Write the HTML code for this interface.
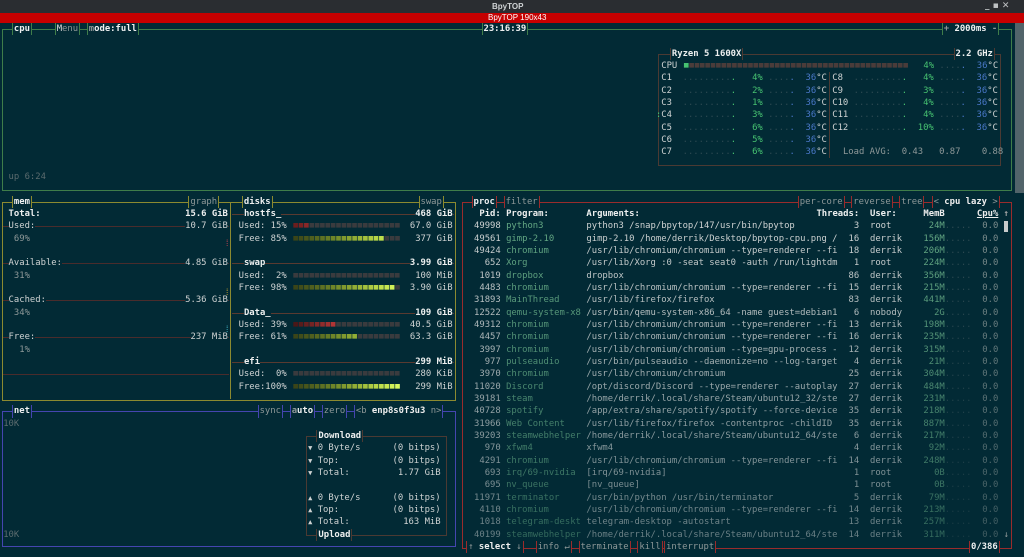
<!DOCTYPE html>
<html><head><meta charset="utf-8"><style>
body{margin:0;width:1024px;height:557px;background:#022a35;overflow:hidden;position:relative;font:8.89px/12.33px "DejaVu Sans Mono","Liberation Mono",monospace;color:#cfd3d3}
.a{position:absolute;white-space:pre}
.bx{position:absolute;border:1px solid}
.t{position:absolute;white-space:pre;background:#022a35;border-left:1px solid;border-right:1px solid;padding:0 1px;height:12.33px}
.B{font-weight:bold;color:#eef0f0}
.gy{color:#8e9898}
.dm{color:#5b6b6e}
.d{color:#2e4a52}
.g{color:#47c271}
.bl{color:#4a78c8}
.hl{position:absolute;height:1px;background:#4a2c2c}
.e{color:#3a3b3e}
.q{font-size:12px;letter-spacing:-1.875px;line-height:0;vertical-align:-0.5px}
.r{position:absolute;left:0;width:1024px;height:12.33px}
.r i{position:absolute;font-style:normal;white-space:pre}
.c1{left:468px;width:32.75px;text-align:right}
.c2{left:506.1px;color:#64a884}
.c3{left:586.4px}
.c4{left:827px;width:32.2px;text-align:right}
.c5{left:870px}
.c6{left:912.7px;width:32.1px;text-align:right;color:#64a884}
.c7{left:944.8px;color:#2e4a52}
.c8{left:976.3px;width:22px;text-align:right;color:#7c8c8c}
</style></head><body>
<div style="position:absolute;left:0;top:0;width:1024px;height:13px;background:#2a2d31"></div>
<div class="a" style="left:492px;top:1px;font:bold 8px/11px 'Liberation Sans',sans-serif;color:#cfd2d4">BpyTOP</div>
<div class="a" style="left:985px;top:1px;font:bold 9px/11px 'DejaVu Sans',sans-serif;color:#bfc2c4">_ ▪ ✕</div>
<div style="position:absolute;left:0;top:13px;width:1024px;height:10px;background:#c60000"></div>
<div class="a" style="left:488px;top:13px;font:8px/10px 'Liberation Sans',sans-serif;color:#fff">BpyTOP 190x43</div>
<div style="position:absolute;left:1015px;top:23px;width:9px;height:170px;background:#52646a"></div>

<div class="bx" style="left:2px;top:29px;width:1008px;height:160px;border-color:#3f7d4a"></div>
<div class="t B" style="left:11.9px;top:23px;border-color:#3f7d4a">cpu</div>
<div class="t gy" style="left:54.7px;top:23px;border-color:#3f7d4a"><span style="color:#ddd">M</span>enu</div>
<div class="t B" style="left:86.8px;top:23px;border-color:#3f7d4a"><span class="gy">m</span>ode:full</div>
<div class="t B" style="left:481.5px;top:23px;border-color:#3f7d4a">23:16:39</div>
<div class="t B" style="left:941.8px;top:23px;border-color:#3f7d4a"><span class="gy">+</span> 2000ms <span class="gy">-</span></div>
<div class="a dm" style="left:8.55px;top:170.96px">up 6:24</div>

<div class="bx" style="left:658px;top:53.8px;width:341px;height:110px;border-color:#4b3a33"></div>
<div style="position:absolute;left:829px;top:72.3px;width:1px;height:86px;background:#4b3a33"></div>
<div class="t B" style="left:669.9px;top:47.66px;border-color:#4b3a33">Ryzen 5 1600X</div>
<div class="t B" style="left:953.5px;top:47.66px;border-color:#4b3a33">2.2 GHz</div>
<div class="a g" style="left:655.9px;top:109.31px">:</div>
<div class="a" style="left:661.25px;top:59.99px">CPU <span class="q"><span class="g">▪</span><span style="color:#4a3c3a">▪▪▪▪▪▪▪▪▪▪▪▪▪▪▪▪▪▪▪▪▪▪▪▪▪▪▪▪▪▪▪▪▪▪▪▪▪▪▪▪▪</span></span>   <span class="g">4%</span> <span class="d">....</span><span class="bl">.</span>  <span class="bl">36</span>°C</div>
<div class="a" style="left:661.25px;top:72.32px">C1  <span class="d">.........</span><span class="g">.</span>   <span class="g">4%</span> <span class="d">....</span><span class="bl">.</span>  <span class="bl">36</span>°C C8  <span class="d">.........</span><span class="g">.</span>   <span class="g">4%</span> <span class="d">....</span><span class="bl">.</span>  <span class="bl">36</span>°C</div>
<div class="a" style="left:661.25px;top:84.65px">C2  <span class="d">.........</span><span class="g">.</span>   <span class="g">2%</span> <span class="d">....</span><span class="bl">.</span>  <span class="bl">36</span>°C C9  <span class="d">.........</span><span class="g">.</span>   <span class="g">3%</span> <span class="d">....</span><span class="bl">.</span>  <span class="bl">36</span>°C</div>
<div class="a" style="left:661.25px;top:96.98px">C3  <span class="d">.........</span><span class="g">.</span>   <span class="g">1%</span> <span class="d">....</span><span class="bl">.</span>  <span class="bl">36</span>°C C10 <span class="d">.........</span><span class="g">.</span>   <span class="g">4%</span> <span class="d">....</span><span class="bl">.</span>  <span class="bl">36</span>°C</div>
<div class="a" style="left:661.25px;top:109.31px">C4  <span class="d">.........</span><span class="g">.</span>   <span class="g">3%</span> <span class="d">....</span><span class="bl">.</span>  <span class="bl">36</span>°C C11 <span class="d">.........</span><span class="g">.</span>   <span class="g">4%</span> <span class="d">....</span><span class="bl">.</span>  <span class="bl">36</span>°C</div>
<div class="a" style="left:661.25px;top:121.64px">C5  <span class="d">.........</span><span class="g">.</span>   <span class="g">6%</span> <span class="d">....</span><span class="bl">.</span>  <span class="bl">36</span>°C C12 <span class="d">.........</span><span class="g">.</span>  <span class="g">10%</span> <span class="d">....</span><span class="bl">.</span>  <span class="bl">36</span>°C</div>
<div class="a" style="left:661.25px;top:133.97px">C6  <span class="d">.........</span><span class="g">.</span>   <span class="g">5%</span> <span class="d">....</span><span class="bl">.</span>  <span class="bl">36</span>°C</div>
<div class="a" style="left:661.25px;top:146.3px">C7  <span class="d">.........</span><span class="g">.</span>   <span class="g">6%</span> <span class="d">....</span><span class="bl">.</span>  <span class="bl">36</span>°C   <span class="gy">Load AVG:  0.43   0.87    0.88</span></div>

<div class="bx" style="left:2px;top:201.8px;width:452px;height:197px;border-color:#8c8a30"></div>
<div style="position:absolute;left:230px;top:201.8px;width:1px;height:197px;background:#8c8a30"></div>
<div class="t B" style="left:11.9px;top:195.62px;border-color:#8c8a30">mem</div>
<div class="t gy" style="left:188.4px;top:195.62px;border-color:#8c8a30">graph</div>
<div class="t B" style="left:241.9px;top:195.62px;border-color:#8c8a30">disks</div>
<div class="t gy" style="left:418.5px;top:195.62px;border-color:#8c8a30">swap</div>
<div class="hl" style="left:3px;top:226.4px;width:226px"></div>
<div class="hl" style="left:3px;top:263.4px;width:226px"></div>
<div class="hl" style="left:3px;top:300.4px;width:226px"></div>
<div class="hl" style="left:3px;top:337.4px;width:226px"></div>
<div class="hl" style="left:3px;top:374.4px;width:226px"></div>
<div class="a B" style="left:8.55px;top:207.95px">Total:</div>
<div class="a B" style="right:796.1px;top:207.95px">15.6 GiB</div>
<div class="a" style="left:8.55px;top:220.28px;background:#022a35">Used:</div>
<div class="a" style="right:796.1px;top:220.28px;background:#022a35">10.7 GiB</div>
<div class="a gy" style="left:13.9px;top:232.61px">69%</div>
<div class="a" style="left:8.55px;top:257.27px;background:#022a35">Available:</div>
<div class="a" style="right:796.1px;top:257.27px;background:#022a35">4.85 GiB</div>
<div class="a gy" style="left:13.9px;top:269.6px">31%</div>
<div class="a" style="left:8.55px;top:294.26px;background:#022a35">Cached:</div>
<div class="a" style="right:796.1px;top:294.26px;background:#022a35">5.36 GiB</div>
<div class="a gy" style="left:13.9px;top:306.59px">34%</div>
<div class="a" style="left:8.55px;top:331.25px;background:#022a35">Free:</div>
<div class="a" style="right:796.1px;top:331.25px;background:#022a35">237 MiB</div>
<div class="a gy" style="left:19.25px;top:343.58px">1%</div>
<div class="a" style="left:224.5px;top:238px;color:#c04050">⁞</div>
<div class="a" style="left:224.5px;top:287px;color:#c0a030">⁞</div>
<div class="a" style="left:224.5px;top:324px;color:#40b0c0">⁞</div>

<div class="hl" style="left:232px;top:214.1px;width:222px;background:#5a3a30"></div>
<div class="hl" style="left:232px;top:263.4px;width:222px;background:#5a3a30"></div>
<div class="hl" style="left:232px;top:312.7px;width:222px;background:#5a3a30"></div>
<div class="hl" style="left:232px;top:362.1px;width:222px;background:#5a3a30"></div>
<div class="a B" style="left:243.95px;top:207.95px;background:#022a35">hostfs_</div>
<div class="a B" style="right:571.4px;top:207.95px;background:#022a35">468 GiB</div>
<div class="a" style="left:238.6px;top:220.28px">Used: 15% <span class="q"><span style="color:#6a1e1e">▪</span><span style="color:#7a2222">▪</span><span style="color:#8a2828">▪</span><span class="e">▪▪▪▪▪▪▪▪▪▪▪▪▪▪▪▪▪</span></span></div>
<div class="a" style="right:571.4px;top:220.28px">67.0 GiB</div>
<div class="a" style="left:238.6px;top:232.61px">Free: 85% <span class="q"><span style="color:#3a4518">▪</span><span style="color:#414d1a">▪</span><span style="color:#48561c">▪</span><span style="color:#4f5f1e">▪</span><span style="color:#566820">▪</span><span style="color:#5e7122">▪</span><span style="color:#667b25">▪</span><span style="color:#6e8528">▪</span><span style="color:#778f2b">▪</span><span style="color:#80992e">▪</span><span style="color:#89a331">▪</span><span style="color:#92ad35">▪</span><span style="color:#9bb739">▪</span><span style="color:#a4c13d">▪</span><span style="color:#adcb42">▪</span><span style="color:#b6d547">▪</span><span style="color:#bfdf4c">▪</span><span class="e">▪▪▪</span></span></div>
<div class="a" style="right:571.4px;top:232.61px">377 GiB</div>
<div class="a B" style="left:243.95px;top:257.27px;background:#022a35">swap</div>
<div class="a B" style="right:571.4px;top:257.27px;background:#022a35">3.99 GiB</div>
<div class="a" style="left:238.6px;top:269.6px">Used:  2% <span class="q e">▪▪▪▪▪▪▪▪▪▪▪▪▪▪▪▪▪▪▪▪</span></div>
<div class="a" style="right:571.4px;top:269.6px">100 MiB</div>
<div class="a" style="left:238.6px;top:281.93px">Free: 98% <span class="q"><span style="color:#3a4518">▪</span><span style="color:#414d1a">▪</span><span style="color:#48561c">▪</span><span style="color:#4f5f1e">▪</span><span style="color:#566820">▪</span><span style="color:#5e7122">▪</span><span style="color:#667b25">▪</span><span style="color:#6e8528">▪</span><span style="color:#778f2b">▪</span><span style="color:#80992e">▪</span><span style="color:#89a331">▪</span><span style="color:#92ad35">▪</span><span style="color:#9bb739">▪</span><span style="color:#a4c13d">▪</span><span style="color:#adcb42">▪</span><span style="color:#b6d547">▪</span><span style="color:#bfdf4c">▪</span><span style="color:#c8e852">▪</span><span style="color:#d0f058">▪</span><span class="e">▪</span></span></div>
<div class="a" style="right:571.4px;top:281.93px">3.90 GiB</div>
<div class="a B" style="left:243.95px;top:306.59px;background:#022a35">Data_</div>
<div class="a B" style="right:571.4px;top:306.59px;background:#022a35">109 GiB</div>
<div class="a" style="left:238.6px;top:318.92px">Used: 39% <span class="q"><span style="color:#4a1818">▪</span><span style="color:#581c1c">▪</span><span style="color:#662020">▪</span><span style="color:#742424">▪</span><span style="color:#822828">▪</span><span style="color:#902c2c">▪</span><span style="color:#a03030">▪</span><span style="color:#b03535">▪</span><span class="e">▪▪▪▪▪▪▪▪▪▪▪▪</span></span></div>
<div class="a" style="right:571.4px;top:318.92px">40.5 GiB</div>
<div class="a" style="left:238.6px;top:331.25px">Free: 61% <span class="q"><span style="color:#3a4518">▪</span><span style="color:#414d1a">▪</span><span style="color:#48561c">▪</span><span style="color:#4f5f1e">▪</span><span style="color:#566820">▪</span><span style="color:#5e7122">▪</span><span style="color:#667b25">▪</span><span style="color:#6e8528">▪</span><span style="color:#778f2b">▪</span><span style="color:#80992e">▪</span><span style="color:#89a331">▪</span><span style="color:#92ad35">▪</span><span class="e">▪▪▪▪▪▪▪▪</span></span></div>
<div class="a" style="right:571.4px;top:331.25px">63.3 GiB</div>
<div class="a B" style="left:243.95px;top:355.91px;background:#022a35">efi</div>
<div class="a B" style="right:571.4px;top:355.91px;background:#022a35">299 MiB</div>
<div class="a" style="left:238.6px;top:368.24px">Used:  0% <span class="q e">▪▪▪▪▪▪▪▪▪▪▪▪▪▪▪▪▪▪▪▪</span></div>
<div class="a" style="right:571.4px;top:368.24px">280 KiB</div>
<div class="a" style="left:238.6px;top:380.57px">Free:100% <span class="q"><span style="color:#3a4518">▪</span><span style="color:#414d1a">▪</span><span style="color:#48561c">▪</span><span style="color:#4f5f1e">▪</span><span style="color:#566820">▪</span><span style="color:#5e7122">▪</span><span style="color:#667b25">▪</span><span style="color:#6e8528">▪</span><span style="color:#778f2b">▪</span><span style="color:#80992e">▪</span><span style="color:#89a331">▪</span><span style="color:#92ad35">▪</span><span style="color:#9bb739">▪</span><span style="color:#a4c13d">▪</span><span style="color:#adcb42">▪</span><span style="color:#b6d547">▪</span><span style="color:#bfdf4c">▪</span><span style="color:#c8e852">▪</span><span style="color:#d0f058">▪</span><span style="color:#d8f860">▪</span></span></div>
<div class="a" style="right:571.4px;top:380.57px">299 MiB</div>

<div class="bx" style="left:2px;top:411.4px;width:452px;height:134px;border-color:#4545b0"></div>
<div class="t B" style="left:11.9px;top:405.23px;border-color:#4545b0">net</div>
<div class="t gy" style="left:257.6px;top:405.23px;border-color:#4545b0">sync</div>
<div class="t B" style="left:289.7px;top:405.23px;border-color:#4545b0"><span class="gy">a</span>uto</div>
<div class="t gy" style="left:321.8px;top:405.23px;border-color:#4545b0">zero</div>
<div class="t" style="left:353.9px;top:405.23px;border-color:#4545b0"><span class="gy">&lt;b</span> <b style="color:#eee">enp8s0f3u3</b> <span class="gy">n&gt;</span></div>
<div class="a dm" style="left:3.2px;top:417.56px">10K</div>
<div class="a dm" style="left:3.2px;top:528.53px">10K</div>
<div class="bx" style="left:305.5px;top:435.9px;width:139px;height:98px;border-color:#4b3a33"></div>
<div class="t B" style="left:316.4px;top:429.89px;border-color:#4b3a33">Download</div>
<div class="t B" style="left:316.4px;top:528.53px;border-color:#4b3a33">Upload</div>
<div class="a" style="left:308.15px;top:442.22px"><span style="font-size:7px">▼</span> 0 Byte/s      (0 bitps)</div>
<div class="a" style="left:308.15px;top:454.55px"><span style="font-size:7px">▼</span> Top:          (0 bitps)</div>
<div class="a" style="left:308.15px;top:466.88px"><span style="font-size:7px">▼</span> Total:         1.77 GiB</div>
<div class="a" style="left:308.15px;top:491.54px"><span style="font-size:7px">▲</span> 0 Byte/s      (0 bitps)</div>
<div class="a" style="left:308.15px;top:503.87px"><span style="font-size:7px">▲</span> Top:          (0 bitps)</div>
<div class="a" style="left:308.15px;top:516.2px"><span style="font-size:7px">▲</span> Total:          163 MiB</div>

<div class="bx" style="left:462px;top:201.8px;width:548px;height:345px;border-color:#9a2c2c"></div>
<div class="t B" style="left:471.5px;top:195.62px;border-color:#9a2c2c">proc</div>
<div class="t gy" style="left:503.6px;top:195.62px;border-color:#9a2c2c">filter</div>
<div class="t gy" style="left:797.8px;top:195.62px;border-color:#9a2c2c">per-core</div>
<div class="t gy" style="left:851.3px;top:195.62px;border-color:#9a2c2c">reverse</div>
<div class="t gy" style="left:899.1px;top:195.62px;border-color:#9a2c2c">tree</div>
<div class="t" style="left:931.6px;top:195.62px;border-color:#9a2c2c"><span class="gy">&lt;</span> <b style="color:#eee">cpu lazy</b> <span class="gy">&gt;</span></div>
<div class="t" style="left:466.2px;top:540.86px;border-color:#9a2c2c"><span class="gy">↑</span> <b style="color:#eee">select</b> <span class="gy">↓</span></div>
<div class="t gy" style="left:535.7px;top:540.86px;border-color:#9a2c2c">info ↵</div>
<div class="t gy" style="left:578.5px;top:540.86px;border-color:#9a2c2c">terminate</div>
<div class="t gy" style="left:637.4px;top:540.86px;border-color:#9a2c2c">kill</div>
<div class="t gy" style="left:664.1px;top:540.86px;border-color:#9a2c2c">interrupt</div>
<div class="t B" style="left:969px;top:540.86px;border-color:#9a2c2c">0/386</div>

<div class="r B" style="top:207.95px"><i class="c1">Pid:</i><i class="c2" style="color:#eee">Program:</i><i class="c3">Arguments:</i><i class="c4" style="left:816px;width:43.2px">Threads:</i><i class="c5">User:</i><i class="c6" style="color:#eee">MemB</i><i class="c8" style="color:#eee;text-decoration:underline">Cpu%</i><i style="left:1003.6px;color:#aaa">↑</i></div>
<div style="position:absolute;left:1004px;top:221px;width:4px;height:11px;background:#c8cccc"></div>
<div class="a gy" style="left:1003.6px;top:528.53px">↓</div>

<div class="r" style="top:220.28px"><i class="c1">49998</i><i class="c2">python3</i><i class="c3">python3 /snap/bpytop/147/usr/bin/bpytop</i><i class="c4">3</i><i class="c5">root</i><i class="c6">24M</i><i class="c7">.....</i><i class="c8">0.0</i></div>
<div class="r" style="top:232.61px;opacity:.98"><i class="c1">49561</i><i class="c2">gimp-2.10</i><i class="c3">gimp-2.10 /home/derrik/Desktop/bpytop-cpu.png /</i><i class="c4">16</i><i class="c5">derrik</i><i class="c6">156M</i><i class="c7">.....</i><i class="c8">0.0</i></div>
<div class="r" style="top:244.94px;opacity:.96"><i class="c1">49424</i><i class="c2">chromium</i><i class="c3">/usr/lib/chromium/chromium --type=renderer --fi</i><i class="c4">18</i><i class="c5">derrik</i><i class="c6">206M</i><i class="c7">.....</i><i class="c8">0.0</i></div>
<div class="r" style="top:257.27px;opacity:.94"><i class="c1">652</i><i class="c2">Xorg</i><i class="c3">/usr/lib/Xorg :0 -seat seat0 -auth /run/lightdm</i><i class="c4">1</i><i class="c5">root</i><i class="c6">224M</i><i class="c7">.....</i><i class="c8">0.0</i></div>
<div class="r" style="top:269.6px;opacity:.92"><i class="c1">1019</i><i class="c2">dropbox</i><i class="c3">dropbox</i><i class="c4">86</i><i class="c5">derrik</i><i class="c6">356M</i><i class="c7">.....</i><i class="c8">0.0</i></div>
<div class="r" style="top:281.93px;opacity:.9"><i class="c1">4483</i><i class="c2">chromium</i><i class="c3">/usr/lib/chromium/chromium --type=renderer --fi</i><i class="c4">15</i><i class="c5">derrik</i><i class="c6">215M</i><i class="c7">.....</i><i class="c8">0.0</i></div>
<div class="r" style="top:294.26px;opacity:.88"><i class="c1">31893</i><i class="c2">MainThread</i><i class="c3">/usr/lib/firefox/firefox</i><i class="c4">83</i><i class="c5">derrik</i><i class="c6">441M</i><i class="c7">.....</i><i class="c8">0.0</i></div>
<div class="r" style="top:306.59px;opacity:.86"><i class="c1">12522</i><i class="c2">qemu-system-x8</i><i class="c3">/usr/bin/qemu-system-x86_64 -name guest=debian1</i><i class="c4">6</i><i class="c5">nobody</i><i class="c6">2G</i><i class="c7">.....</i><i class="c8">0.0</i></div>
<div class="r" style="top:318.92px;opacity:.84"><i class="c1">49312</i><i class="c2">chromium</i><i class="c3">/usr/lib/chromium/chromium --type=renderer --fi</i><i class="c4">13</i><i class="c5">derrik</i><i class="c6">198M</i><i class="c7">.....</i><i class="c8">0.0</i></div>
<div class="r" style="top:331.25px;opacity:.82"><i class="c1">4457</i><i class="c2">chromium</i><i class="c3">/usr/lib/chromium/chromium --type=renderer --fi</i><i class="c4">16</i><i class="c5">derrik</i><i class="c6">235M</i><i class="c7">.....</i><i class="c8">0.0</i></div>
<div class="r" style="top:343.58px;opacity:.8"><i class="c1">3997</i><i class="c2">chromium</i><i class="c3">/usr/lib/chromium/chromium --type=gpu-process -</i><i class="c4">12</i><i class="c5">derrik</i><i class="c6">315M</i><i class="c7">.....</i><i class="c8">0.0</i></div>
<div class="r" style="top:355.91px;opacity:.78"><i class="c1">977</i><i class="c2">pulseaudio</i><i class="c3">/usr/bin/pulseaudio --daemonize=no --log-target</i><i class="c4">4</i><i class="c5">derrik</i><i class="c6">21M</i><i class="c7">.....</i><i class="c8">0.0</i></div>
<div class="r" style="top:368.24px;opacity:.76"><i class="c1">3970</i><i class="c2">chromium</i><i class="c3">/usr/lib/chromium/chromium</i><i class="c4">25</i><i class="c5">derrik</i><i class="c6">304M</i><i class="c7">.....</i><i class="c8">0.0</i></div>
<div class="r" style="top:380.57px;opacity:.74"><i class="c1">11020</i><i class="c2">Discord</i><i class="c3">/opt/discord/Discord --type=renderer --autoplay</i><i class="c4">27</i><i class="c5">derrik</i><i class="c6">484M</i><i class="c7">.....</i><i class="c8">0.0</i></div>
<div class="r" style="top:392.9px;opacity:.72"><i class="c1">39181</i><i class="c2">steam</i><i class="c3">/home/derrik/.local/share/Steam/ubuntu12_32/ste</i><i class="c4">27</i><i class="c5">derrik</i><i class="c6">231M</i><i class="c7">.....</i><i class="c8">0.0</i></div>
<div class="r" style="top:405.23px;opacity:.7"><i class="c1">40728</i><i class="c2">spotify</i><i class="c3">/app/extra/share/spotify/spotify --force-device</i><i class="c4">35</i><i class="c5">derrik</i><i class="c6">218M</i><i class="c7">.....</i><i class="c8">0.0</i></div>
<div class="r" style="top:417.56px;opacity:.68"><i class="c1">31966</i><i class="c2">Web Content</i><i class="c3">/usr/lib/firefox/firefox -contentproc -childID</i><i class="c4">35</i><i class="c5">derrik</i><i class="c6">887M</i><i class="c7">.....</i><i class="c8">0.0</i></div>
<div class="r" style="top:429.89px;opacity:.66"><i class="c1">39203</i><i class="c2">steamwebhelper</i><i class="c3">/home/derrik/.local/share/Steam/ubuntu12_64/ste</i><i class="c4">6</i><i class="c5">derrik</i><i class="c6">217M</i><i class="c7">.....</i><i class="c8">0.0</i></div>
<div class="r" style="top:442.22px;opacity:.64"><i class="c1">970</i><i class="c2">xfwm4</i><i class="c3">xfwm4</i><i class="c4">4</i><i class="c5">derrik</i><i class="c6">92M</i><i class="c7">.....</i><i class="c8">0.0</i></div>
<div class="r" style="top:454.55px;opacity:.62"><i class="c1">4291</i><i class="c2">chromium</i><i class="c3">/usr/lib/chromium/chromium --type=renderer --fi</i><i class="c4">14</i><i class="c5">derrik</i><i class="c6">248M</i><i class="c7">.....</i><i class="c8">0.0</i></div>
<div class="r" style="top:466.88px;opacity:.6"><i class="c1">693</i><i class="c2">irq/69-nvidia</i><i class="c3">[irq/69-nvidia]</i><i class="c4">1</i><i class="c5">root</i><i class="c6">0B</i><i class="c7">.....</i><i class="c8">0.0</i></div>
<div class="r" style="top:479.21px;opacity:.58"><i class="c1">695</i><i class="c2">nv_queue</i><i class="c3">[nv_queue]</i><i class="c4">1</i><i class="c5">root</i><i class="c6">0B</i><i class="c7">.....</i><i class="c8">0.0</i></div>
<div class="r" style="top:491.54px;opacity:.56"><i class="c1">11971</i><i class="c2">terminator</i><i class="c3">/usr/bin/python /usr/bin/terminator</i><i class="c4">5</i><i class="c5">derrik</i><i class="c6">79M</i><i class="c7">.....</i><i class="c8">0.0</i></div>
<div class="r" style="top:503.87px;opacity:.54"><i class="c1">4110</i><i class="c2">chromium</i><i class="c3">/usr/lib/chromium/chromium --type=renderer --fi</i><i class="c4">14</i><i class="c5">derrik</i><i class="c6">213M</i><i class="c7">.....</i><i class="c8">0.0</i></div>
<div class="r" style="top:516.2px;opacity:.52"><i class="c1">1018</i><i class="c2">telegram-deskt</i><i class="c3">telegram-desktop -autostart</i><i class="c4">13</i><i class="c5">derrik</i><i class="c6">257M</i><i class="c7">.....</i><i class="c8">0.0</i></div>
<div class="r" style="top:528.53px;opacity:.5"><i class="c1">40199</i><i class="c2">steamwebhelper</i><i class="c3">/home/derrik/.local/share/Steam/ubuntu12_64/ste</i><i class="c4">14</i><i class="c5">derrik</i><i class="c6">311M</i><i class="c7">.....</i><i class="c8">0.0</i></div>
</body></html>
